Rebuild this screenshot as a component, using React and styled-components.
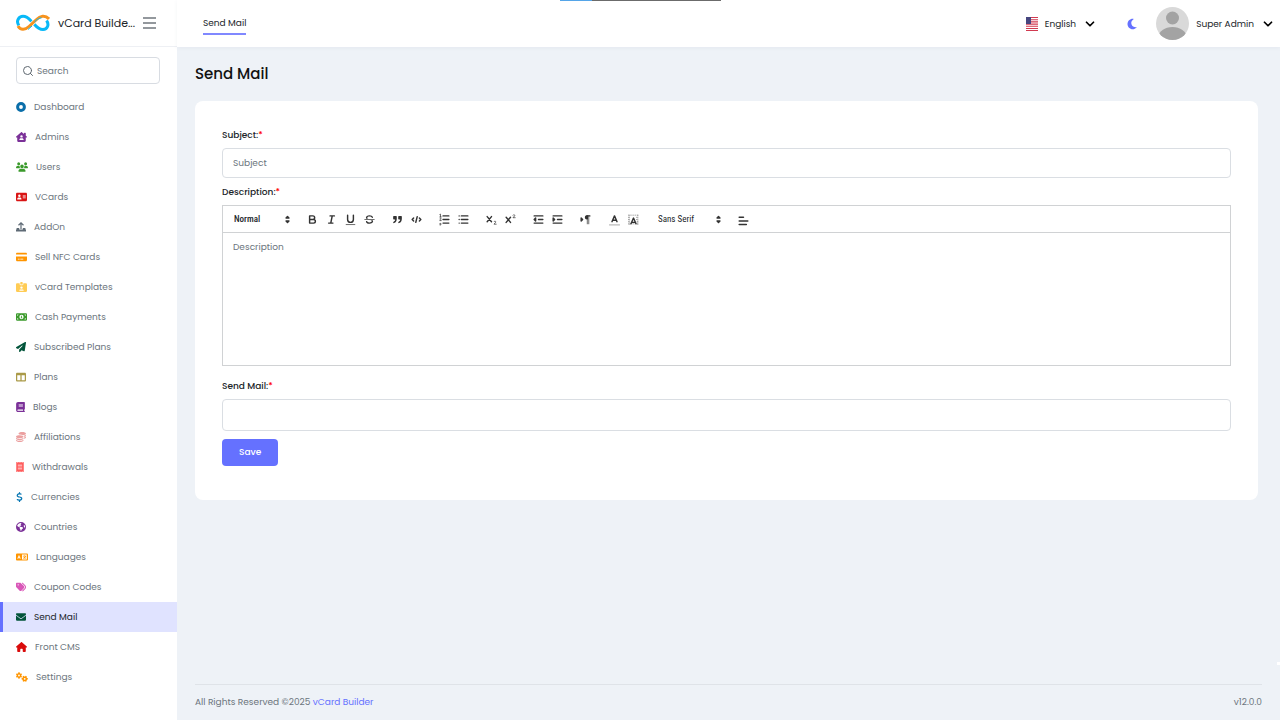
import React from "react"
import styled, { createGlobalStyle, css } from "styled-components"
import {
  FaUsers,
  FaAddressCard,
  FaCreditCard,
  FaIdCardClip,
  FaMoneyBill1,
  FaPaperPlane,
  FaTableColumns,
  FaBook,
  FaCoins,
  FaReceipt,
  FaDollarSign,
  FaEarthAmericas,
  FaLanguage,
  FaTags,
  FaEnvelope,
  FaHouse,
  FaGears,
  FaHouseChimneyUser,
  FaMoon,
} from "react-icons/fa6"
import { FiSearch, FiChevronDown } from "react-icons/fi"

const GlobalStyle = createGlobalStyle`
*{ box-sizing: border-box; }
body{
margin: 0;
background: #eef2f7;
color: #212529;
font-family: Poppins, Inter, "Open Sans", sans-serif;
font-size: 9px;
line-height: 16px;
}
button, input, select, textarea{
font: inherit;
color: inherit;
}
a{ color: inherit; text-decoration: none; }
`;

//layout
const Page = styled.div`
display: flex;
min-height: 100vh;
`;
const Sidebar = styled.aside`
flex: none;
width: 177px;
background: #fff;
`;
const Brand = styled.div`
display: flex;
align-items: center;
justify-content: space-between;
height: 47px;
padding: 0 21px 0 16px;
border-bottom: 1px solid #eef0f4;
`;
const BrandName = styled.a`
font-size: 11px;
white-space: nowrap;
`;
const PlainButton = styled.button`
display: flex;
align-items: center;
gap: ${p => p.$gap || 0}px;
padding: 0;
border: 0;
background: none;
cursor: pointer;
`;
const Search = styled.label`
display: flex;
align-items: center;
gap: 3px;
height: 27px;
margin: 10px 17px 8px 16px;
padding: 0 5px;
border: 1px solid #d8dce2;
border-radius: 4px;
color: #5f6870;
`;
const SearchInput = styled.input`
flex: 1;
min-width: 0;
padding: 0;
border: 0;
outline: 0;
background: none;
&::placeholder{ color: #6c757d; opacity: 1; }
`;
const NavItem = styled.a`
display: flex;
align-items: center;
gap: 8px;
height: 30px;
padding-left: 13px;
border-left: 3px solid transparent;
color: #6c757d;
svg{
width: ${p => p.$wide}px;
height: 10px;
color: ${p => p.$tint};
}
${p => p.$active && css`
background: #e0e3ff;
border-left-color: #6571ff;
color: #212529;
`}
`;
const Content = styled.div`
flex: 1;
min-width: 0;
display: flex;
flex-direction: column;
`;
const Topbar = styled.header`
display: flex;
align-items: center;
height: 47px;
padding: 0 5px 0 26px;
background: #fff;
box-shadow: 0 1px 4px rgba(60, 80, 120, 0.06);
`;
const Tab = styled.a`
margin-right: auto;
padding: 3px 0 2px;
border-bottom: 2px solid #8088ff;
`;
const Moon = styled(PlainButton)`
margin: 0 18px 0 29px;
color: #6571ff;
`;
const LoadBar = styled.div`
position: absolute;
top: 0;
left: calc(50% - 80px);
width: 161px;
height: 1px;
background: linear-gradient(to right, #55a5e8 32px, #6b6b6b 32px);
`;
const EdgeTab = styled.div`
position: fixed;
right: 0;
bottom: 55px;
width: 3px;
height: 3px;
background: #fff;
`;
const Main = styled.main`
flex: 1;
padding: 15px 22px 0 18px;
`;
const Title = styled.h1`
margin: 0 0 15px;
font-size: 15px;
font-weight: 500;
line-height: 24px;
color: #111;
`;
const Card = styled.form`
padding: 26px 27px 34px;
border-radius: 8px;
background: #fff;
`;
const Label = styled.label`
display: block;
margin-bottom: 5px;
font-weight: 500;
`;
const Star = styled.span`
color: #f00;
`;
const Field = styled.input`
display: block;
width: 100%;
height: ${p => p.$tall ? 32 : 30}px;
margin-bottom: ${p => p.$tall ? 8 : 6}px;
padding: 0 10px;
border: 1px solid #dadee3;
border-radius: 4px;
outline: 0;
background: #fff;
&::placeholder{ color: #6c757d; opacity: 1; }
`;
const Editor = styled.div`
margin-bottom: 12px;
border: 1px solid #d0d2d4;
`;
const Toolbar = styled.div`
display: flex;
align-items: center;
gap: 9px;
height: 27px;
padding-left: 5px;
border-bottom: 1px solid #d0d2d4;
`;
const Group = styled.div`
display: flex;
margin-left: ${p => p.$picker ? 1 : 0}px;
`;
const Tool = styled.button`
display: grid;
place-items: center;
width: 19px;
height: 18px;
padding: 0;
border: 0;
background: none;
`;
const Picker = styled.label`
display: flex;
align-items: center;
width: ${p => p.$width}px;
padding-left: 6px;
`;
const PickerSelect = styled.select`
flex: 1;
min-width: 0;
padding: 0;
border: 0;
appearance: none;
background: none;
font-family: "Liberation Sans Narrow", "Arial Narrow", "Roboto Condensed", "Liberation Sans", sans-serif;
font-weight: ${p => p.$strong ? 500 : 400};
`;
const Glyph = styled.svg`
display: block;
flex: none;
width: 13px;
height: 13px;
fill: none;
stroke: #333;
stroke-width: 2;
stroke-linecap: round;
stroke-linejoin: round;
.fill{ fill: #333; stroke: none; }
.both{ fill: #333; }
.thin{ stroke-width: 1; }
.faint{ stroke: #888; stroke-width: 1; }
`;
const TextArea = styled.textarea`
display: block;
width: 100%;
height: 132px;
padding: 6px 10px;
border: 0;
outline: 0;
resize: none;
&::placeholder{ color: #6c757d; opacity: 1; }
`;
const Save = styled.button`
padding: 6px 17px;
border: 0;
border-radius: 4px;
background: #6571ff;
color: #fff;
font-weight: 500;
line-height: 15px;
`;
const Footer = styled.footer`
display: flex;
justify-content: space-between;
margin: 0 18px;
padding: 9px 0 10px;
border-top: 1px solid #dfe3e8;
color: #6c757d;
a{ color: #6571ff; }
`;

//drawings
const Logo = () => (
  <svg width="34" height="18" viewBox="0 0 34 18" fill="none">
    <path d="M3 11.5C-.5 7 3 2.300 7 2.300c4.500 0 6.500 3 9.500 6.200" stroke="#08b9f8" strokeWidth="3" />
    <path d="M18 10c3 3.500 5 5.500 9 5.500 4.500 0 6.500-5 3.500-9" stroke="#08b9f8" strokeWidth="3" />
    <path d="M2 12c2.500 4.500 7 4.300 11 .5l7.500-7C24 2 29 .5 33 5" stroke="#fff" strokeWidth="4" />
    <path d="M2 12c2.500 4.500 7 4.300 11 .5l7.500-7C24 2 29 .5 33 5" stroke="#f7931e" strokeWidth="3" />
    <path d="M12 15.500l4-3.500M18.500 8c3-3 4.500-4 7-4.200" stroke="#08b9f8" />
  </svg>
)

const MenuIcon = () => (
  <svg width="13" height="12" viewBox="0 0 13 12" stroke="#70777e" strokeWidth="1.5">
    <path d="M0 1h13M0 6h13M0 11h13" />
  </svg>
)

const DotIcon = () => (
  <svg viewBox="0 0 10 10">
    <circle cx="5" cy="5" r="3.4" fill="none" stroke="currentColor" strokeWidth="3" />
  </svg>
)

const UploadIcon = () => (
  <svg viewBox="0 0 10 10" fill="none" stroke="currentColor">
    <path d="M5 7V1M2.5 3.3 5 .9l2.500 2.400" strokeWidth="1.2" />
    <path d="M0 8.500h10M.6 6.800h2.600M6.800 6.800h2.600" strokeWidth="1.8" />
  </svg>
)

const Flag = () => (
  <svg width="12" height="14" viewBox="0 0 12 14">
    <path fill="#fff" d="M0 0h12v14H0z" />
    <path stroke="#d13a50" strokeWidth="1.1" d="M0 .5h12M0 2.700h12M0 4.900h12M0 7.100h12M0 9.300h12M0 11.500h12M0 13.500h12" />
    <path fill="#46467f" d="M0 0h5v7H0z" />
  </svg>
)

const Avatar = () => (
  <svg width="33" height="33" viewBox="0 0 33 33">
    <defs>
      <clipPath id="avatar"><circle cx="16.5" cy="16.5" r="16.5" /></clipPath>
    </defs>
    <g clipPath="url(#avatar)">
      <path fill="#d9d9d9" d="M0 0h33v33H0z" />
      <circle cx="16.5" cy="11" r="6.5" fill="#a3a3a3" />
      <ellipse cx="16.5" cy="30" rx="14" ry="10" fill="#a3a3a3" />
    </g>
  </svg>
)

const Sorter = () => (
  <Glyph viewBox="0 0 18 18">
    <path className="both" d="M7 11l2 2 2-2zM7 7l2-2 2 2z" />
  </Glyph>
)

const glyphs = {
  Bold: <path d="M5 4h4.5a2.5 2.5 0 0 1 0 5H5zM5 9h5.5a2.5 2.5 0 0 1 0 5H5z" />,
  Italic: <path d="M7 4h6M5 14h6M8 14l2-10" />,
  Underline: <><path d="M5 3v6a4 4 0 0 0 8 0V3" /><path className="thin" d="M3 16h12" /></>,
  Strike: (
    <>
      <path className="thin" d="M2.5 9h13" />
      <path className="fill" d="M9.007,8C6.542,7.791,6,7.519,6,6.5,6,5.792,7.283,5,9,5c1.571,0,2.765.679,2.969,1.309a1,1,0,0,0,1.9-.617C13.356,4.106,11.354,3,9,3,6.2,3,4,4.538,4,6.5a3.2,3.2,0,0,0,.5,1.5Z" />
      <path className="fill" d="M8.984,10C11.457,10.208,12,10.479,12,11.5c0,.708-1.283,1.5-3,1.5-1.571,0-2.765-.679-2.969-1.309a1,1,0,1,0-1.9.617C4.644,13.894,6.646,15,9,15c2.8,0,5-1.538,5-3.5a3.2,3.2,0,0,0-.5-1.5Z" />
    </>
  ),
  Quote: <path className="both" d="M4 5h3v3H4zM11 5h3v3h-3zM7 8c0 4-3 5-3 5M14 8c0 4-3 5-3 5" />,
  Code: <path d="M5 7 3 9l2 2M13 7l2 2-2 2M10 5 8 13" />,
  "Ordered list": (
    <>
      <path d="M7 4h8M7 9h8M7 14h8" />
      <path className="thin" d="M2.5 5.5h2M3.5 5.5v-4l-1 .5M4.5 10.5h-2c0-1 2-1.5 2-2.3 0-1-1.5-1-2-.3M2.5 14.6c2-.8 2.5.9 1 .9 1.5 0 1 1.7-1 1" />
    </>
  ),
  "Bullet list": <path d="M6 4h9M6 9h9M6 14h9M3 4h0M3 9h0M3 14h0" />,
  Subscript: <><path d="M3 5l6 7M9 5l-6 7" /><path className="thin" d="M12.5 12c1-1.5 3-.5 2.2 1l-2.2 2.5h3" /></>,
  Superscript: <><path d="M3 6l6 7M9 6l-6 7" /><path className="thin" d="M12.5 3c1-1.5 3-.5 2.2 1l-2.2 2.5h3" /></>,
  Outdent: <path d="M3 14h12M3 4h12M9 9h6M5 7v4L3 9z" />,
  Indent: <path className="both" d="M3 14h12M3 4h12M9 9h6M3 7v4l2-2z" />,
  Direction: <><path className="both" d="M3 7v4l2-2zM11 4a2 2 0 0 0 0 4h.5V4z" /><path d="M15 4h-4" /><path className="thin" d="M11.5 4v11M13.5 4v11" /></>,
  Color: <><path d="M5.5 12 9 4l3.5 8M11.5 10h-5" /><path className="faint" d="M2 16.5h14" /></>,
  Background: (
    <>
      <path className="faint" strokeDasharray="1 2" d="M2 3h14M2 6h3M13 6h3M2 9h3M13 9h3M2 12h2M14 12h2M2 15h14M3 3v13M15 3v13" />
      <path d="M5.5 15 9 7l3.5 8M11.5 13h-5" />
    </>
  ),
  Align: <path d="M3 6h6M3 11h12M3 16h10" />,
}

const Tools = ({ names, picker }) => (
  <Group $picker={picker}>
    {names.map(name => (
      <Tool key={name} type="button" aria-label={name}>
        <Glyph viewBox="0 0 18 18">{glyphs[name]}</Glyph>
      </Tool>
    ))}
  </Group>
)

//name, icon, colour, icon width
const links = [
  ["Dashboard", DotIcon, "#0a6ea9", 10],
  ["Admins", FaHouseChimneyUser, "#7b3198", 11],
  ["Users", FaUsers, "#3b9a2c", 12],
  ["VCards", FaAddressCard, "#d91414", 11],
  ["AddOn", UploadIcon, "#5f6b76", 10],
  ["Sell NFC Cards", FaCreditCard, "#ff9500", 11],
  ["vCard Templates", FaIdCardClip, "#ffcc55", 11],
  ["Cash Payments", FaMoneyBill1, "#3b9a2c", 11],
  ["Subscribed Plans", FaPaperPlane, "#02543a", 10],
  ["Plans", FaTableColumns, "#aa9a48", 10],
  ["Blogs", FaBook, "#7b3198", 9],
  ["Affiliations", FaCoins, "#eba0a0", 10],
  ["Withdrawals", FaReceipt, "#ff5c5c", 8],
  ["Currencies", FaDollarSign, "#0a78b4", 7],
  ["Countries", FaEarthAmericas, "#7b3198", 10],
  ["Languages", FaLanguage, "#ff9500", 12],
  ["Coupon Codes", FaTags, "#d957b8", 10],
  ["Send Mail", FaEnvelope, "#02543a", 10],
  ["Front CMS", FaHouse, "#d90b0b", 11],
  ["Settings", FaGears, "#ff9500", 12],
]

const App = () => (
  <Page>
    <GlobalStyle />
    <LoadBar />
    <Sidebar>
      <Brand>
        <Logo />
        <BrandName href="#">vCard Builde...</BrandName>
        <PlainButton aria-label="Toggle menu"><MenuIcon /></PlainButton>
      </Brand>
      <Search>
        <FiSearch size={12} />
        <SearchInput type="search" placeholder="Search" aria-label="Search" />
      </Search>
      <nav>
        {links.map(([name, Icon, tint, wide]) => (
          <NavItem key={name} href="#" $tint={tint} $wide={wide} $active={name === "Send Mail"}>
            <Icon />
            {name}
          </NavItem>
        ))}
      </nav>
    </Sidebar>
    <Content>
      <Topbar>
        <Tab href="#">Send Mail</Tab>
        <PlainButton $gap={7}>
          <Flag />
          English
          <FiChevronDown size={14} strokeWidth={3} color="#000" />
        </PlainButton>
        <Moon aria-label="Dark mode"><FaMoon size={12} /></Moon>
        <PlainButton $gap={7}>
          <Avatar />
          Super Admin
          <FiChevronDown size={14} strokeWidth={3} color="#000" />
        </PlainButton>
      </Topbar>
      <Main>
        <Title>Send Mail</Title>
        <Card>
          <Label htmlFor="subject">Subject:<Star>*</Star></Label>
          <Field id="subject" placeholder="Subject" />
          <Label htmlFor="description">Description:<Star>*</Star></Label>
          <Editor>
            <Toolbar>
              <Picker $width={66}>
                <PickerSelect $strong aria-label="Heading"><option>Normal</option></PickerSelect>
                <Sorter />
              </Picker>
              <Tools names={["Bold", "Italic", "Underline", "Strike"]} />
              <Tools names={["Quote", "Code"]} />
              <Tools names={["Ordered list", "Bullet list"]} />
              <Tools names={["Subscript", "Superscript"]} />
              <Tools names={["Outdent", "Indent"]} />
              <Tools names={["Direction"]} />
              <Tools picker names={["Color", "Background"]} />
              <Picker $width={73}>
                <PickerSelect aria-label="Font"><option>Sans Serif</option></PickerSelect>
                <Sorter />
              </Picker>
              <Tools names={["Align"]} />
            </Toolbar>
            <TextArea id="description" placeholder="Description" />
          </Editor>
          <Label htmlFor="send-mail">Send Mail:<Star>*</Star></Label>
          <Field id="send-mail" $tall />
          <Save type="button">Save</Save>
        </Card>
      </Main>
      <Footer>
        <span>All Rights Reserved ©2025 <a href="#">vCard Builder</a></span>
        <span>v12.0.0</span>
      </Footer>
    </Content>
    <EdgeTab />
  </Page>
)

export default App
